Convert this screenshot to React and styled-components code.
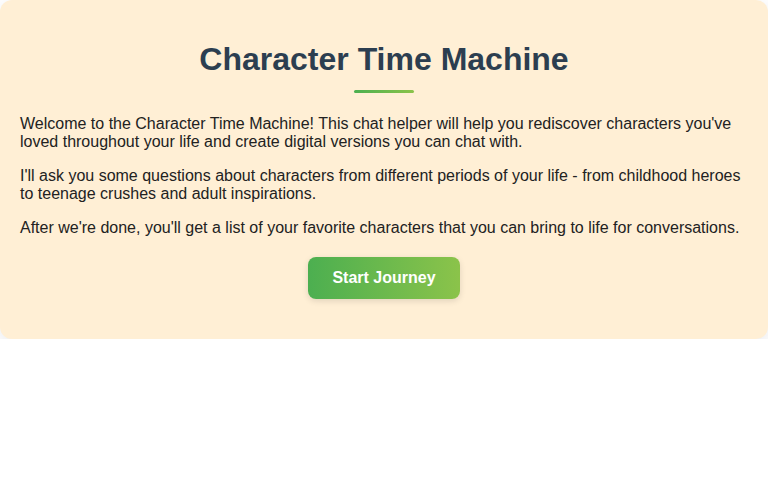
import React from 'react';
import styled, { createGlobalStyle } from 'styled-components';

const GlobalStyle = createGlobalStyle`
  body {
    margin: 0;
    background: #fff;
    font-family: "Liberation Sans", Arial, sans-serif;
  }
`;

const Card = styled.div`
  background-color: #ffefd5;
  border-radius: 12px;
  box-shadow: 0 5px 18px rgba(30, 40, 70, 0.1);
  padding: 20px;
  text-align: center;
`;

const Title = styled.h1`
  font-size: 32px;
  font-weight: bold;
  color: #2c3e50;
  margin: 21px 0 0;
  line-height: 37px;
`;

const Divider = styled.div`
  width: 60px;
  height: 3px;
  margin: 12px auto 22px;
  border-radius: 2px;
  background: linear-gradient(to right, #4caf50, #8bc34a);
`;

const Para = styled.p`
  font-size: 16px;
  line-height: 18px;
  color: #222;
  text-align: left;
  margin: 0 0 16px;
`;

const Actions = styled.div`
  display: flex;
  justify-content: center;
  padding: 4px 0 20px;
`;

const Button = styled.button`
  font-family: inherit;
  font-size: 16px;
  font-weight: bold;
  line-height: 18px;
  color: #fff;
  border: none;
  border-radius: 8px;
  padding: 12px 24px;
  background: linear-gradient(to right, #4caf50, #8bc34a);
  box-shadow: 0 2px 6px rgba(0, 0, 0, 0.12);
  cursor: pointer;
`;

export default function App() {
  return (
    <>
      <GlobalStyle />
      <Card>
        <Title>Character Time Machine</Title>
        <Divider />
        <Para>
          Welcome to the Character Time Machine! This chat helper will help you
          rediscover characters you've loved throughout your life and create
          digital versions you can chat with.
        </Para>
        <Para>
          I'll ask you some questions about characters from different periods
          of your life - from childhood heroes to teenage crushes and adult
          inspirations.
        </Para>
        <Para>
          After we're done, you'll get a list of your favorite characters that
          you can bring to life for conversations.
        </Para>
        <Actions>
          <Button>Start Journey</Button>
        </Actions>
      </Card>
    </>
  );
}
